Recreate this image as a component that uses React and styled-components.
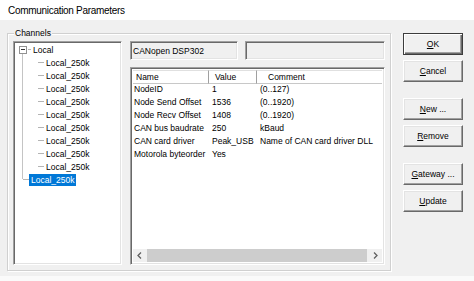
import React from "react";
import styled, { createGlobalStyle, css } from "styled-components";

const Global = createGlobalStyle`
  html, body { margin: 0; padding: 0; background: #fafafa; }
  body {
    font-family: "Liberation Sans", Arial, sans-serif;
    font-size: 8.5px;
    color: #000;
  }
  #root { width: 474px; height: 281px; overflow: hidden; }
`;

const Window = styled.div`
  width: 474px;
  height: 276px;
  background: #f0f0f0;
  display: flex;
  flex-direction: column;
`;

const TitleBar = styled.div`
  height: 20px;
  flex: none;
  background: #fff;
  display: flex;
  align-items: center;
  padding-left: 8px;
  font-size: 10px;
  letter-spacing: -0.3px;
  color: #000;
`;

const Body = styled.div`
  display: flex;
  align-items: flex-start;
  gap: 12px;
  padding: 13px 0 0 7px;
`;

const GroupBox = styled.div`
  position: relative;
  box-sizing: border-box;
  width: 384px;
  height: 238px;
  border: 1px solid #d0d0d0;
  box-shadow: inset 1px 1px 0 #fff, 1px 1px 0 #fff;
  padding: 7px 5px 5px 5px;
  display: flex;
  gap: 8px;
`;

const GroupLabel = styled.span`
  position: absolute;
  top: -6px;
  left: 6px;
  padding: 0 1px;
  background: #f0f0f0;
  line-height: 10px;
`;

const sunken = css`
  box-sizing: border-box;
  border: 1px solid;
  border-color: #a0a0a0 #fff #fff #a0a0a0;
  box-shadow: inset 1px 1px 0 #696969, inset -1px -1px 0 #e3e3e3;
`;

const Tree = styled.div`
  ${sunken};
  position: relative;
  width: 109px;
  height: 224px;
  background: #fff;
  padding: 1px 1px;
  display: flex;
  flex-direction: column;
`;

const RootGuide = styled.div`
  position: absolute;
  left: 8px;
  top: 12px;
  height: 125px;
  border-left: 1px solid #c4c4c4;
`;

const TreeRow = styled.div`
  position: relative;
  height: 13px;
  line-height: 13px;
  display: flex;
  align-items: center;
  padding-left: ${(p) => p.$indent}px;
  ${(p) =>
    p.$tick &&
    css`
      &::before {
        content: "";
        position: absolute;
        left: ${p.$tick[0]}px;
        width: ${p.$tick[1]}px;
        top: 6px;
        height: 1px;
        background: #b4b4b4;
      }
    `}
`;

const ExpandBox = styled.span`
  box-sizing: border-box;
  width: 8px;
  height: 8px;
  border: 1px solid #919191;
  background: #fff;
  display: inline-flex;
  align-items: center;
  justify-content: center;
  &::after {
    content: "";
    width: 4px;
    height: 1px;
    background: #333;
  }
`;

const Stub = styled.span`
  width: 3px;
  height: 1px;
  background: #b4b4b4;
  margin-left: 1px;
`;

const NodeLabel = styled.span`
  padding: 0 2px;
  line-height: 12px;
  white-space: nowrap;
  ${(p) =>
    p.$selected &&
    css`
      background: #0078d7;
      color: #fff;
    `}
`;

const RightPanel = styled.div`
  width: 255px;
  display: flex;
  flex-direction: column;
  gap: 7px;
`;

const FieldRow = styled.div`
  display: flex;
  gap: 7px;
`;

const TextField = styled.div`
  ${sunken};
  height: 19px;
  width: ${(p) => (p.$w ? `${p.$w}px` : "auto")};
  flex: ${(p) => (p.$w ? "none" : "1")};
  background: #f0f0f0;
  padding-left: 2px;
  display: flex;
  align-items: center;
  white-space: nowrap;
`;

const ListView = styled.div`
  ${sunken};
  height: 198px;
  background: #fff;
  padding: 2px;
  display: flex;
  flex-direction: column;
`;

const columns = "76px 48px 1fr";

const HeaderRow = styled.div`
  display: grid;
  grid-template-columns: ${columns};
  height: 13px;
  flex: none;
`;

const HeaderCell = styled.div`
  box-sizing: border-box;
  padding-left: ${(p) => p.$pad}px;
  line-height: 12px;
  border-right: 1px solid #a0a0a0;
  border-bottom: 1px solid #c8c8c8;
  border-top: 1px solid #e0e0e0;
  background: #fff;
  white-space: nowrap;
  &:last-child {
    border-right: none;
  }
`;

const DataRow = styled.div`
  display: grid;
  grid-template-columns: ${columns};
  height: 13px;
  line-height: 13px;
`;

const Cell = styled.div`
  padding-left: ${(p) => p.$pad}px;
  white-space: nowrap;
  overflow: hidden;
`;

const Filler = styled.div`
  flex: 1;
`;

const HScroll = styled.div`
  flex: none;
  height: 13px;
  display: grid;
  grid-template-columns: 13px 1fr 13px;
  background: #f0f0f0;
`;

const ScrollArrow = styled.div`
  display: flex;
  align-items: center;
  justify-content: center;
`;

const Thumb = styled.div`
  background: #cdcdcd;
  margin: 0 2px 0 1px;
`;

const ButtonColumn = styled.div`
  display: flex;
  flex-direction: column;
  gap: 16px;
  width: 60px;
`;

const ButtonStack = styled.div`
  display: flex;
  flex-direction: column;
  gap: 5px;
`;

const Button = styled.button`
  box-sizing: border-box;
  width: 60px;
  height: 22px;
  padding: 0;
  font-family: inherit;
  font-size: 8.5px;
  color: #000;
  background: #f0f0f0;
  border: 1px solid;
  border-color: #fff #696969 #696969 #fff;
  box-shadow: inset -1px -1px 0 #a0a0a0, inset 1px 1px 0 #e3e3e3;
  ${(p) =>
    p.$default &&
    css`
      border-color: #3c3c3c;
      box-shadow: inset 1px 1px 0 #fff, inset -1px -1px 0 #696969,
        inset -2px -2px 0 #a0a0a0;
    `}
`;

const Mn = styled.span`
  text-decoration: underline;
`;

const Chevron = ({ dir }) => (
  <svg width="5" height="7" viewBox="0 0 5 7">
    <polyline
      points={dir === "left" ? "4,0.5 1,3.5 4,6.5" : "1,0.5 4,3.5 1,6.5"}
      fill="none"
      stroke="#606060"
      strokeWidth="1.3"
    />
  </svg>
);

const rows = [
  ["NodeID", "1", "(0..127)"],
  ["Node Send Offset", "1536", "(0..1920)"],
  ["Node Recv Offset", "1408", "(0..1920)"],
  ["CAN bus baudrate", "250", "kBaud"],
  ["CAN card driver", "Peak_USB", "Name of CAN card driver DLL"],
  ["Motorola byteorder", "Yes", ""],
];

const children = Array.from({ length: 9 }, () => "Local_250k");

export default function App() {
  return (
    <>
      <Global />
      <Window>
        <TitleBar>Communication Parameters</TitleBar>
        <Body>
          <GroupBox>
            <GroupLabel>Channels</GroupLabel>
            <Tree>
              <RootGuide />
              <TreeRow $indent={4}>
                <ExpandBox />
                <Stub />
                <NodeLabel>Local</NodeLabel>
              </TreeRow>
              {children.map((c, i) => (
                <TreeRow key={i} $indent={29} $tick={[23, 6]}>
                  <NodeLabel>{c}</NodeLabel>
                </TreeRow>
              ))}
              <TreeRow $indent={14} $tick={[8, 6]}>
                <NodeLabel $selected>Local_250k</NodeLabel>
              </TreeRow>
            </Tree>
            <RightPanel>
              <FieldRow>
                <TextField $w={108}>CANopen DSP302</TextField>
                <TextField />
              </FieldRow>
              <ListView>
                <HeaderRow>
                  <HeaderCell $pad={3}>Name</HeaderCell>
                  <HeaderCell $pad={6}>Value</HeaderCell>
                  <HeaderCell $pad={11}>Comment</HeaderCell>
                </HeaderRow>
                {rows.map((r) => (
                  <DataRow key={r[0]}>
                    <Cell $pad={1}>{r[0]}</Cell>
                    <Cell $pad={3}>{r[1]}</Cell>
                    <Cell $pad={3}>{r[2]}</Cell>
                  </DataRow>
                ))}
                <Filler />
                <HScroll>
                  <ScrollArrow>
                    <Chevron dir="left" />
                  </ScrollArrow>
                  <Thumb />
                  <ScrollArrow>
                    <Chevron dir="right" />
                  </ScrollArrow>
                </HScroll>
              </ListView>
            </RightPanel>
          </GroupBox>
          <ButtonColumn>
            <ButtonStack>
              <Button $default>
                <Mn>O</Mn>K
              </Button>
              <Button>
                <Mn>C</Mn>ancel
              </Button>
            </ButtonStack>
            <ButtonStack>
              <Button>
                <Mn>N</Mn>ew ...
              </Button>
              <Button>
                <Mn>R</Mn>emove
              </Button>
            </ButtonStack>
            <ButtonStack>
              <Button>
                <Mn>G</Mn>ateway ...
              </Button>
              <Button>
                <Mn>U</Mn>pdate
              </Button>
            </ButtonStack>
          </ButtonColumn>
        </Body>
      </Window>
    </>
  );
}
